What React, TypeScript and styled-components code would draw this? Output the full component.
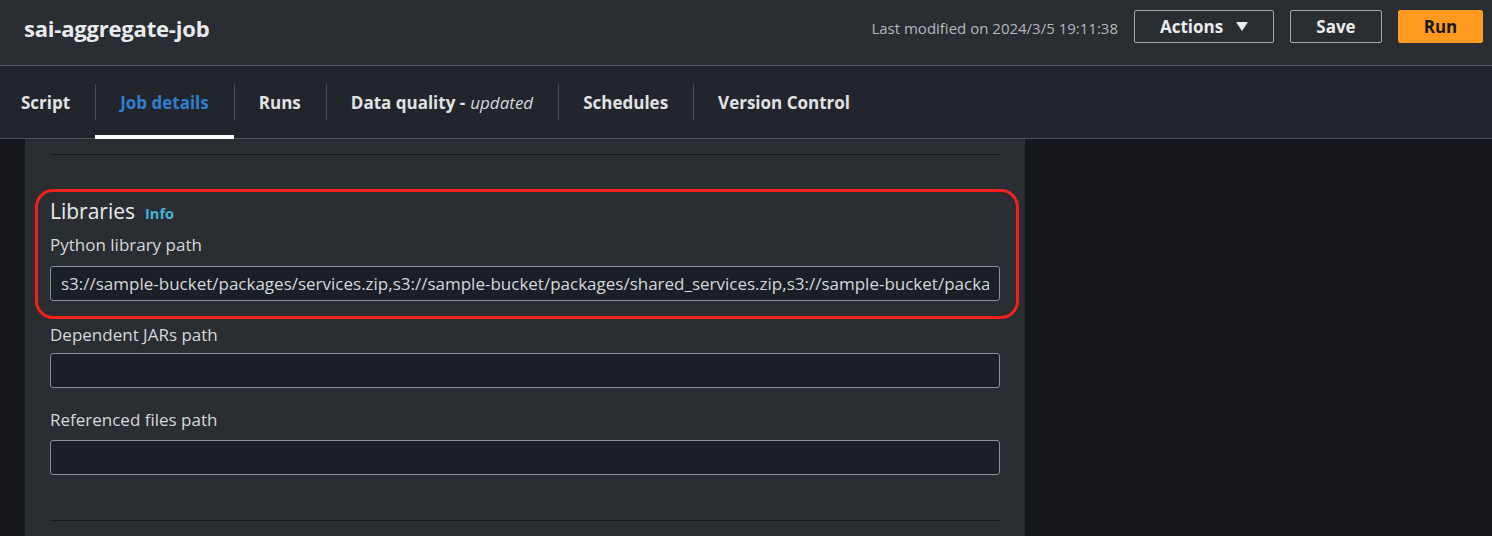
import React from 'react'
import styled, { createGlobalStyle } from 'styled-components'

const GlobalStyle = createGlobalStyle`
  html, body {
    margin: 0;
    padding: 0;
    background: #16181d;
    font-family: 'Open Sans', 'Noto Sans', sans-serif;
    color: #d1d5db;
  }
`

const Page = styled.div`
  width: 1492px;
  height: 536px;
  overflow: hidden;
  display: flex;
  flex-direction: column;
`

const Header = styled.header`
  height: 66px;
  box-sizing: border-box;
  flex-shrink: 0;
  background: #2a2d32;
  border-bottom: 1px solid #5f6368;
  display: flex;
  align-items: flex-start;
  padding: 10px 9px 0 24px;
`

const Title = styled.h1`
  margin: 2px 0 0;
  flex: 1;
  font-size: 22px;
  line-height: 33px;
  font-weight: 700;
  color: #e9ebed;
  letter-spacing: -0.2px;
`

const Modified = styled.span`
  font-size: 15px;
  line-height: 33px;
  color: #b4b8bd;
  margin-top: 2px;
`

const Button = styled.button<{ $primary?: boolean; $width: number }>`
  width: ${p => p.$width}px;
  height: 33px;
  box-sizing: border-box;
  border-radius: 2px;
  font-family: inherit;
  font-size: 17px;
  font-weight: 700;
  display: flex;
  align-items: center;
  justify-content: center;
  gap: 13px;
  margin-left: 16px;
  cursor: pointer;
  border: 1px solid ${p => (p.$primary ? '#ff9a1e' : '#a3a8ad')};
  background: ${p => (p.$primary ? '#ff9a1e' : 'transparent')};
  color: ${p => (p.$primary ? '#16191f' : '#e9ebed')};
  padding: 0;
`

const Caret = styled.span`
  width: 0;
  height: 0;
  border-left: 6px solid transparent;
  border-right: 6px solid transparent;
  border-top: 9px solid #e9ebed;
`

const TabBar = styled.nav`
  height: 73px;
  box-sizing: border-box;
  flex-shrink: 0;
  background: #22252c;
  border-bottom: 1px solid #4c5056;
  display: flex;
  align-items: stretch;
`

const Tab = styled.div<{ $active?: boolean }>`
  position: relative;
  display: flex;
  align-items: center;
  padding: 0 25px;
  font-size: 17px;
  font-weight: 700;
  color: ${p => (p.$active ? '#2f7fcf' : '#e0e2e5')};
  &:first-child {
    padding-left: 21px;
  }
  &:not(:first-child)::before {
    content: '';
    position: absolute;
    left: 0;
    top: 18px;
    bottom: 18px;
    width: 1px;
    background: #4a4e55;
  }
  &::after {
    content: '';
    position: absolute;
    left: 0;
    right: 0;
    bottom: -1px;
    height: 4px;
    background: ${p => (p.$active ? '#ffffff' : 'transparent')};
  }
`

const Italic = styled.em`
  font-weight: 400;
  margin-left: 5px;
  color: #d5d8dc;
`

const Body = styled.div`
  flex: 1;
  display: flex;
  padding-left: 25px;
`

const Panel = styled.section`
  width: 1000px;
  background: #2a2d32;
  padding: 15px 25px 0;
  box-sizing: border-box;
`

const Divider = styled.hr<{ $top?: number }>`
  border: none;
  border-top: 1px solid #16181d;
  margin: ${p => p.$top ?? 0}px 0 0;
`

const Highlight = styled.div`
  margin: 34px -19px 0 -15px;
  padding: 7px 16px 15px 12px;
  border: 3px solid #f0231b;
  border-radius: 18px;
`

const SectionTitle = styled.h2`
  margin: 0;
  display: flex;
  align-items: baseline;
  gap: 10px;
  font-size: 21px;
  line-height: 24px;
  font-weight: 400;
  color: #e9ebed;
`

const InfoLink = styled.a`
  font-size: 14.5px;
  font-weight: 700;
  color: #44b3d6;
`

const Field = styled.div<{ $top: number; $gap: number }>`
  margin-top: ${p => p.$top}px;
  display: flex;
  flex-direction: column;
  gap: ${p => p.$gap}px;
`

const Label = styled.label`
  font-size: 17px;
  color: #d5d8dc;
  line-height: 22px;
`

const Input = styled.input`
  height: 35px;
  box-sizing: border-box;
  background: #1b1f27;
  border: 1px solid #8a9097;
  border-radius: 3px;
  padding: 0 10px;
  font-family: inherit;
  font-size: 17px;
  color: #d5d8dc;
  outline: none;
`

const Spacer = styled.div`
  flex: 1;
`

export default function App() {
  return (
    <Page>
      <GlobalStyle />
      <Header>
        <Title>sai-aggregate-job</Title>
        <Modified>Last modified on 2024/3/5 19:11:38</Modified>
        <Button $width={140}>
          Actions <Caret />
        </Button>
        <Button $width={92}>Save</Button>
        <Button $primary $width={85}>Run</Button>
      </Header>
      <TabBar>
        <Tab>Script</Tab>
        <Tab $active>Job details</Tab>
        <Tab>Runs</Tab>
        <Tab>
          Data quality -<Italic>updated</Italic>
        </Tab>
        <Tab>Schedules</Tab>
        <Tab>Version Control</Tab>
      </TabBar>
      <Body>
        <Panel>
          <Divider />
          <Highlight>
            <SectionTitle>
              Libraries <InfoLink>Info</InfoLink>
            </SectionTitle>
            <Field $top={8} $gap={10}>
              <Label>Python library path</Label>
              <Input
                readOnly
                value="s3://sample-bucket/packages/services.zip,s3://sample-bucket/packages/shared_services.zip,s3://sample-bucket/packages/common.zip"
              />
            </Field>
          </Highlight>
          <Field $top={5} $gap={7}>
            <Label>Dependent JARs path</Label>
            <Input readOnly value="" />
          </Field>
          <Field $top={21} $gap={9}>
            <Label>Referenced files path</Label>
            <Input readOnly value="" />
          </Field>
          <Divider $top={45} />
        </Panel>
        <Spacer />
      </Body>
    </Page>
  )
}
